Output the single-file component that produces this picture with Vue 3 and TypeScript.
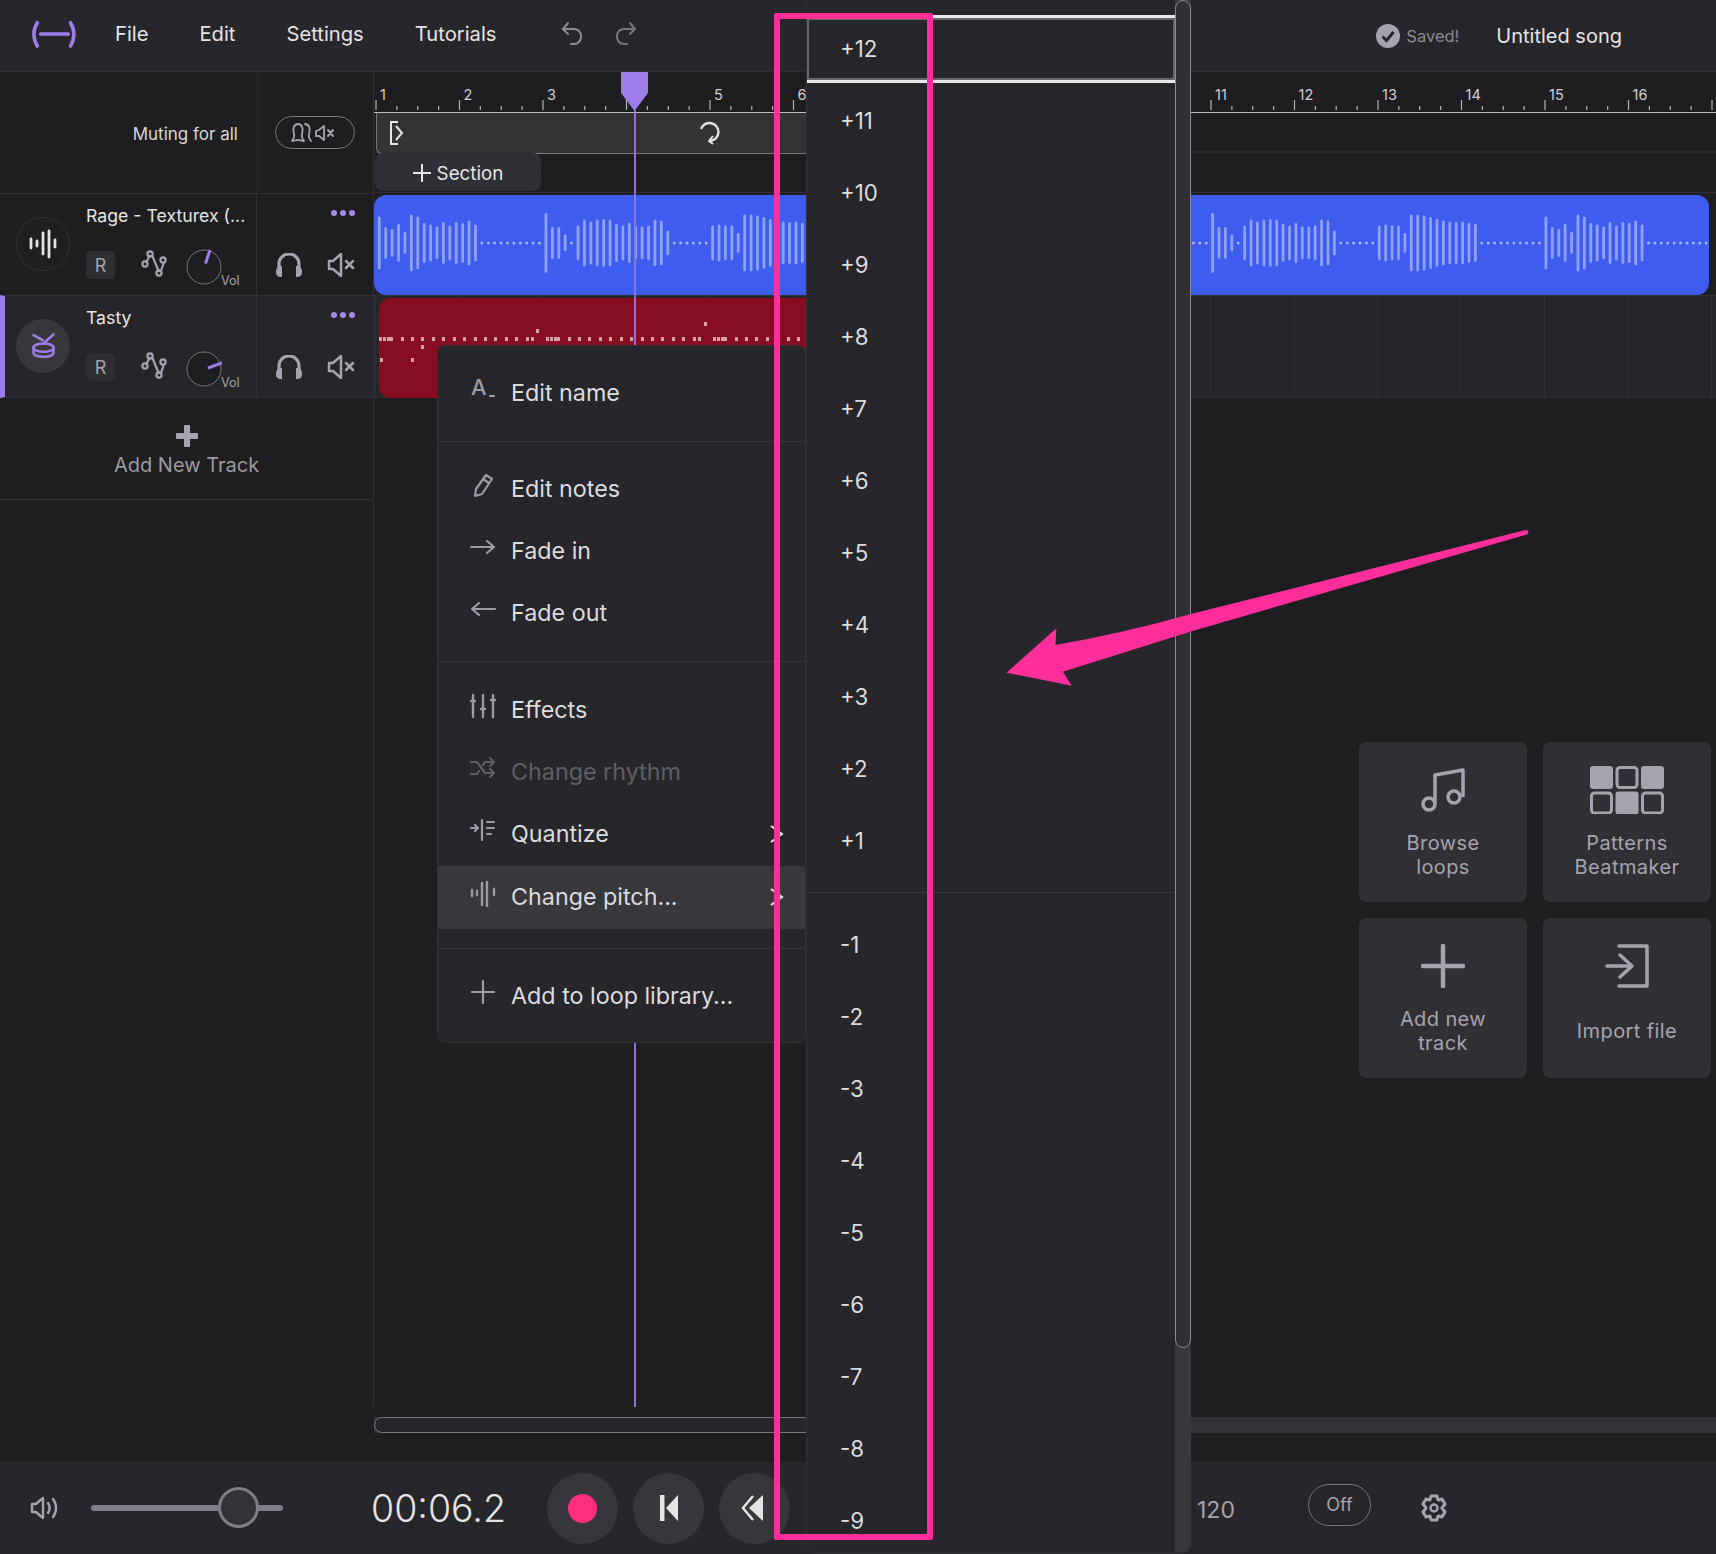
<!-- DAW screen with the track context menu and the pitch submenu open -->
<template>
  <div class="app">
    <header class="topbar">
      <svg class="logo" width="48" height="32" viewBox="0 0 48 32" fill="none" stroke="#9d7de9" stroke-width="3.6" stroke-linecap="round">
        <path d="M7.3 4.7Q.5 16 7.3 28" />
        <path d="M10.7 16H38.3" />
        <path d="M40.5 4.7Q47.3 16 40.5 28" />
      </svg>
      <nav class="nav">
        <span v-for="item in navItems" :key="item">{{ item }}</span>
      </nav>
      <div class="history">
        <svg width="26" height="26" viewBox="0 0 26 26" fill="none" stroke="#8c8c92" stroke-width="2" stroke-linecap="round" stroke-linejoin="round">
          <path d="M9 2 4 8l5 5" /><path d="M4 8h11a7 7 0 0 1 7 7v1a7 7 0 0 1-7 7h-3" />
        </svg>
        <svg width="26" height="26" viewBox="0 0 26 26" fill="none" stroke="#77777c" stroke-width="2" stroke-linecap="round" stroke-linejoin="round">
          <path d="m17 2 5 6-5 5" /><path d="M22 8H11a7 7 0 0 0-7 7v1a7 7 0 0 0 7 7h3" />
        </svg>
      </div>
      <div class="saved">
        <svg width="24" height="24" viewBox="0 0 24 24">
          <circle cx="12" cy="12" r="12" fill="#a5a3ad" />
          <path d="m6.5 12.5 4 4 7-8.5" fill="none" stroke="#26262b" stroke-width="3" />
        </svg>
        <span>Saved!</span>
      </div>
      <div class="song-title">Untitled song</div>
    </header>

    <main class="workspace">
      <aside class="tracks">
        <div class="tracks-head">
          <div class="muting-label">Muting for all</div>
          <div class="muting-cell">
            <div class="muting-pill">
              <svg width="52" height="24" viewBox="0 0 52 24" fill="none" stroke="#a5a3ad" stroke-width="1.8" stroke-linejoin="round" stroke-linecap="round">
                <path d="M3 20c2-3 3-4 2-7C3 8 5 3 9 3s6 5 4 10c-1 3 0 4 2 7-3 0-3-1-6-1s-3 1-6 1z" />
                <path d="M16 3c4 0 6 5 4 10-1 3 0 4 2 7" />
                <path d="M27 10v5h3l5 4V5l-5 4z" />
                <path d="m39 9 5 6M44 9l-5 6" stroke-width="2" />
              </svg>
            </div>
          </div>
        </div>

        <div v-for="track in tracks" :key="track.name" class="track" :class="{ selected: track.selected }">
          <div class="track-main">
            <div class="avatar">
              <svg v-if="!track.selected" width="30" height="30" viewBox="0 0 30 30" stroke="#e4e4e4" stroke-width="2.800" stroke-linecap="round">
                <path d="M3 10v9M9 12v5M15 4v21M21 2v26M27 11v7" />
              </svg>
              <svg v-else width="25" height="28" viewBox="0 0 30 30" fill="none" stroke="#9d7de9" stroke-width="3" stroke-linecap="round">
                <path d="M3 2l11 6M27 1 15 12" />
                <ellipse cx="15" cy="17" rx="12" ry="5" />
                <path d="M3 17v6c0 3 5 5 12 5s12-2 12-5v-6" />
              </svg>
            </div>
            <div class="track-info">
              <div class="track-name">{{ track.name }}</div>
              <div class="track-controls">
                <span class="rec-chip">R</span>
                <svg class="route" width="26" height="27" viewBox="0 0 26 27" fill="none" stroke="#a5a3ad" stroke-width="2.200">
                  <path d="M5 13 9 5M11 5l7 17M20 21l3-9" />
                  <circle cx="9" cy="4" r="2.600" /><circle cx="4" cy="14" r="2.600" />
                  <circle cx="18" cy="23" r="2.600" /><circle cx="22" cy="10" r="2.600" />
                </svg>
                <div class="knob">
                  <svg width="36" height="36" viewBox="0 0 36 36" fill="none">
                    <circle cx="18" cy="18" r="17" :fill="track.selected ? '#1e1e21' : 'none'" stroke="#77777c" stroke-width="1" />
                    <path :d="track.knob" stroke="#9d7de9" stroke-width="3" />
                  </svg>
                  <span>Vol</span>
                </div>
              </div>
            </div>
          </div>
          <div class="track-side">
            <div class="more"><i /><i /><i /></div>
            <div class="track-toggles">
              <svg width="28" height="24" viewBox="0 0 28 24" fill="none">
                <path d="M4 17v-6a10 10 0 0 1 20 0v6" stroke="#a5a3ad" stroke-width="3.200" />
                <path d="M1 19c0-4 2-6 6-6v11c-4 0-6-1-6-5zM27 19c0-4-2-6-6-6v11c4 0 6-1 6-5z" fill="#a5a3ad" />
              </svg>
              <svg width="28" height="24" viewBox="0 0 28 24" fill="none" stroke="#a5a3ad" stroke-width="2.500" stroke-linejoin="round" stroke-linecap="round">
                <path d="M2 8v8h4l8 7V1L6 8z" /><path d="m19 8 7 7M26 8l-7 7" />
              </svg>
            </div>
          </div>
        </div>

        <div class="add-track">
          <svg width="24" height="24" viewBox="0 0 24 24" fill="#a5a3ad">
            <rect x="9" y="1" width="6" height="22" rx="1" /><rect x="1" y="9" width="22" height="6" rx="1" />
          </svg>
          <span>Add New Track</span>
        </div>
      </aside>

      <section class="timeline">
        <svg class="ruler" width="1342" height="40" viewBox="0 0 1342 40">
          <path :d="rulerTicks" stroke="#b5b5b8" stroke-width="1.200" fill="none" />
          <text v-for="bar in rulerLabels" :key="bar.n" :x="bar.x + 4" y="28" class="ruler-num">{{ bar.n }}</text>
        </svg>
        <div class="loop-row">
          <div class="loop-bar">
            <svg class="loop-in" width="16" height="24" viewBox="0 0 16 24" fill="none" stroke="#e4e4e4" stroke-width="2">
              <path d="M9 1H2v22h7M7 5l6 7-6 7" />
            </svg>
            <svg class="loop-mode" width="24" height="26" viewBox="0 0 24 26" fill="none" stroke="#e4e4e4" stroke-width="2.400">
              <path d="M3 10a9 9 0 1 1 9 12" />
              <path d="m15 17-4 5 4 3" stroke-width="2" />
            </svg>
          </div>
        </div>
        <div class="section-row">
          <button class="section-btn">
            <svg width="18" height="18" viewBox="0 0 18 18" stroke="#e4e4e4" stroke-width="2"><path d="M9 0v18M0 9h18" /></svg>
            Section
          </button>
        </div>

        <div class="lane lane-audio">
          <div class="clip clip-blue">
            <svg width="1335" height="100" viewBox="0 0 1335 100">
              <template v-for="(b, i) in waveBars" :key="i">
                <circle v-if="b.h === 0" :cx="b.x" cy="48" r="1.500" fill="#a9b5f7" />
                <rect v-else :x="b.x - 1.400" :y="48 - b.h / 2" width="2.800" :height="b.h" rx="1.400" fill="#8ea0f7" />
              </template>
            </svg>
          </div>
        </div>
        <div class="lane lane-midi">
          <div class="clip clip-red">
            <svg width="430" height="101" viewBox="0 0 430 101">
              <rect v-for="(n, i) in midiNotes" :key="i" :x="n.x" :y="n.y" width="3" height="4" fill="#d8a0a8" />
            </svg>
          </div>
        </div>

        <div class="empty">
          <div class="cards">
            <div class="card">
              <svg class="card-icon" width="46" height="44" viewBox="0 0 46 44" fill="none" stroke="#a5a3ad" stroke-width="3.500" stroke-linejoin="round">
                <circle cx="9" cy="36" r="6" /><circle cx="34" cy="29" r="6" />
                <path d="M15 36V7L43 2v27" />
              </svg>
              <div class="card-label">Browse<br />loops</div>
            </div>
            <div class="card">
              <svg class="card-icon grid-icon" width="74" height="48" viewBox="0 0 74 48">
                <rect v-for="(cell, i) in patternCells" :key="i" :x="cell.x" :y="cell.y" :width="cell.on ? 23 : 20" :height="cell.on ? 23 : 20" rx="3"
                  :fill="cell.on ? '#a5a3ad' : 'none'" :stroke="cell.on ? 'none' : '#a5a3ad'" stroke-width="3" />
              </svg>
              <div class="card-label">Patterns<br />Beatmaker</div>
            </div>
            <div class="card">
              <svg class="card-icon" width="44" height="44" viewBox="0 0 44 44" stroke="#a5a3ad" stroke-width="4.500" stroke-linecap="round">
                <path d="M22 2v40M2 22h40" />
              </svg>
              <div class="card-label">Add new<br />track</div>
            </div>
            <div class="card">
              <svg class="card-icon" width="44" height="44" viewBox="0 0 44 44" fill="none" stroke="#a5a3ad" stroke-width="3.500" stroke-linecap="round" stroke-linejoin="round">
                <path d="M14 2h28v40H14M2 22h25M15 11l12 11-12 11" />
              </svg>
              <div class="card-label">Import file</div>
            </div>
          </div>
        </div>

        <div class="hscroll"><div class="hscroll-thumb" /></div>

        <div class="playhead">
          <svg width="27" height="40" viewBox="0 0 27 40"><path d="M0 0h27v21L13.500 39 0 21z" fill="#9d7de9" /></svg>
          <div class="playhead-line" />
        </div>
      </section>
    </main>

    <footer class="transport">
      <svg class="speaker" width="30" height="28" viewBox="0 0 30 28" fill="none" stroke="#a5a3ad" stroke-width="2.400" stroke-linejoin="round" stroke-linecap="round">
        <path d="M2 10v8h4l7 6V4L6 10z" /><path d="M18 9c2 3 2 7 0 10M23 5c4 5 4 13 0 18" />
      </svg>
      <div class="volume">
        <div class="volume-thumb" />
      </div>
      <div class="clock">00:06.2</div>
      <div class="round-btn first">
        <div class="rec-dot" />
      </div>
      <div class="round-btn">
        <svg width="20" height="28" viewBox="0 0 20 28" fill="#e4e4e4"><rect x="1" y="1" width="4.500" height="26" /><path d="M7 14 19 1v26z" /></svg>
      </div>
      <div class="round-btn rewind">
        <svg width="32" height="28" viewBox="0 0 32 28"><path d="M12 2 2 14l10 12" fill="none" stroke="#e4e4e4" stroke-width="2.500" /><path d="M8 14 22 1v26z" fill="#e4e4e4" /></svg>
      </div>
      <div class="tempo">120</div>
      <div class="off-pill">Off</div>
      <svg class="gear" width="28" height="28" viewBox="0 0 28 28" fill="none" stroke="#a5a3ad" stroke-width="3">
        <path d="M11 2h6l1 4 4-1 3 5-3 4 3 4-3 5-4-1-1 4h-6l-1-4-4 1-3-5 3-4-3-4 3-5 4 1z" stroke-linejoin="round" />
        <circle cx="14" cy="14" r="3.500" stroke-width="2.500" />
      </svg>
    </footer>

    <div class="context-menu">
      <div v-for="(group, g) in menuGroups" :key="g" class="menu-group">
        <div v-for="item in group" :key="item.label" class="menu-item" :class="{ disabled: item.disabled, active: item.active }">
          <svg class="menu-icon" width="24" height="24" viewBox="0 0 24 24" fill="none" :stroke="item.disabled ? '#5f5f65' : '#9d9ba5'" stroke-width="2.200" stroke-linecap="round" stroke-linejoin="round">
            <template v-if="item.icon === 'name'">
              <text x="0" y="18" class="icon-a">A</text><path d="M19 19h4" />
            </template>
            <path v-else-if="item.icon === 'pencil'" d="M15 2l6 4-10 15-7 2 1-7zM12 6l6 4" />
            <path v-else-if="item.icon === 'right'" d="M0 12h23M16 6l7 6-7 6" />
            <path v-else-if="item.icon === 'left'" d="M24 12H1M8 6l-7 6 7 6" />
            <path v-else-if="item.icon === 'effects'" d="M2 1v22M12 1v22M22 1v22M0 7h4M10 15h4M20 6h4" stroke-width="2.400" />
            <path v-else-if="item.icon === 'rhythm'" d="M0 6h6l8 11h9M0 18h6l2-3M12 9l2-3h9M19 2l4 4-4 4M19 13l4 4-4 4" />
            <path v-else-if="item.icon === 'quantize'" d="M0 10h7M4 7l3 3-3 3M11 2v20M16 4h7M16 10h7M16 16h4" />
            <path v-else-if="item.icon === 'pitch'" d="M1 8v6M6 9v4M11 1v22M16 0v24M23 7v6" stroke-width="2.400" />
            <path v-else-if="item.icon === 'plus'" d="M12 1v22M1 12h22" />
          </svg>
          <span>{{ item.label }}</span>
          <svg v-if="item.chevron" class="chevron" width="14" height="18" viewBox="0 0 14 18" fill="none" stroke="#e4e4e4" stroke-width="2"><path d="m1 1 11 8-11 8" /></svg>
        </div>
      </div>
    </div>

    <div class="pitch-menu">
      <div class="pitch-list">
        <div v-for="(value, i) in pitchUp" :key="value" class="pitch-item" :class="{ focused: i === 0 }">{{ value }}</div>
        <div class="pitch-divider" />
        <div v-for="value in pitchDown" :key="value" class="pitch-item">{{ value }}</div>
      </div>
      <div class="pitch-scroll"><div class="pitch-scroll-thumb" /></div>
    </div>

    <div class="callout-box" />
    <svg class="callout-arrow" width="540" height="170" viewBox="1000 525 540 170">
      <path d="M1525.7 530.100 1190 614.300Q1120 634 1055.400 645L1056.400 628.300 1006.400 672.700 1071.800 685.700 1062.900 671.700 1190 631.700 1527.500 534.300Q1530 530 1525.700 530.100z" fill="#ff2e9a" />
    </svg>
  </div>
</template>

<script setup lang="ts">
interface Track {
  name: string
  selected: boolean
  knob: string
}

interface MenuItem {
  label: string
  icon: string
  disabled?: boolean
  active?: boolean
  chevron?: boolean
}

const navItems = ['File', 'Edit', 'Settings', 'Tutorials']

const tracks: Track[] = [
  { name: 'Rage - Texturex (...', selected: false, knob: 'M19.500 14.500 24 1' },
  { name: 'Tasty', selected: true, knob: 'M22 17 36 12' },
]

const BAR_WIDTH = 83.5

const rulerBars = Array.from({ length: 17 }, (_, i) => ({ n: i + 1, x: 2 + i * BAR_WIDTH }))
// bar 17 only shows its tick, the number would run off the page
const rulerLabels = rulerBars.slice(0, 16)

const rulerTicks = rulerBars
  .map((bar) => {
    let d = `M${bar.x} 28V38`
    for (let t = 1; t < 4; t++) d += `M${bar.x + (t * BAR_WIDTH) / 4} 34V38`
    return d
  })
  .join('')

// bar heights of the three phrases, 0 is a silent dot
const A = [53, 32, 28, 38, 22, 57, 53, 40, 37, 33, 42, 35, 42, 40, 45, 37, 0, 0, 0, 0, 0, 0, 0, 0, 0, 0]
const B = [60, 32, 32, 17, 0, 35, 47, 43, 47, 48, 47, 38, 35, 40, 33, 33, 35, 47, 45, 25, 0, 0, 0, 0, 0, 0]
const C = [35, 37, 35, 35, 20, 57, 57, 55, 52, 48, 45, 43, 42, 43, 40, 38, 0, 0, 0, 0, 0, 0, 0, 0, 0, 0]

const waveBars = [A, B, C, A, A, B, C, A]
  .flat()
  .map((h, i) => ({ h, x: 5.3 + i * 6.41 }))

const MIDI_STEPS = [0, 4, 8, 11, 22, 32, 42, 53, 63, 74, 84, 95, 105, 115, 126, 136, 147, 152]

const midiNotes = [
  ...[0, 1, 2].flatMap((k) => MIDI_STEPS.map((s) => ({ x: s + k * 167, y: 39 }))),
  ...[42, 126, 209, 293, 376].map((x) => ({ x, y: 47 })),
  { x: 157, y: 31 },
  { x: 325, y: 24 },
  { x: 1, y: 60 },
  { x: 32, y: 60 },
]

const patternCells = [
  { x: 0, y: 0, on: true },
  { x: 27, y: 1.5, on: false },
  { x: 51, y: 0, on: true },
  { x: 1.5, y: 27, on: false },
  { x: 25.5, y: 25.5, on: true },
  { x: 52.5, y: 27, on: false },
]

const menuGroups: MenuItem[][] = [
  [{ label: 'Edit name', icon: 'name' }],
  [
    { label: 'Edit notes', icon: 'pencil' },
    { label: 'Fade in', icon: 'right' },
    { label: 'Fade out', icon: 'left' },
  ],
  [
    { label: 'Effects', icon: 'effects' },
    { label: 'Change rhythm', icon: 'rhythm', disabled: true },
    { label: 'Quantize', icon: 'quantize', chevron: true },
    { label: 'Change pitch...', icon: 'pitch', active: true, chevron: true },
  ],
  [{ label: 'Add to loop library...', icon: 'plus' }],
]

const pitchUp = Array.from({ length: 12 }, (_, i) => `+${12 - i}`)
const pitchDown = Array.from({ length: 9 }, (_, i) => `-${i + 1}`)
</script>

<style>
html,
body {
  margin: 0;
  background: #1e1e21;
}
</style>

<style scoped>
.app {
  position: relative;
  width: 1716px;
  height: 1554px;
  overflow: hidden;
  display: flex;
  flex-direction: column;
  background: #1e1e21;
  color: #e4e4e4;
  font-family: Inter, "Liberation Sans", sans-serif;
}

.topbar {
  flex: none;
  height: 72px;
  box-sizing: border-box;
  display: flex;
  align-items: center;
  padding: 0 0 4px 30px;
  background: #26262b;
  border-bottom: 1px solid #303035;
}

.nav {
  display: flex;
  gap: 51px;
  margin-left: 37px;
  font-size: 20.200px;
}

.history {
  display: flex;
  gap: 28px;
  margin-left: 63px;
}

.saved {
  margin-left: auto;
  display: flex;
  align-items: center;
  gap: 6px;
  font-size: 16.500px;
  color: #8a8a90;
  padding-top: 4px;
}

.song-title {
  margin: 4px 94px 0 37px;
  font-size: 20px;
}

.workspace {
  flex: 1;
  min-height: 0;
  display: flex;
}

.tracks {
  flex: none;
  width: 374px;
  box-sizing: border-box;
  height: 1334px;
  border-right: 1px solid #303035;
}

.tracks-head {
  height: 121px;
  display: flex;
}

.muting-label {
  width: 238px;
  padding-top: 52px;
  text-align: right;
  font-size: 17px;
  color: #d6d6d8;
}

.muting-cell {
  margin-left: 19px;
  flex: 1;
  border-left: 1px solid #2b2b2f;
  padding: 44px 0 0 17px;
}

.muting-pill {
  width: 80px;
  height: 33px;
  box-sizing: border-box;
  border: 1px solid #77777c;
  border-radius: 17px;
  display: flex;
  align-items: center;
  justify-content: center;
}

.track {
  height: 102px;
  box-sizing: border-box;
  display: flex;
  border-top: 1px solid #303035;
}

.track.selected {
  height: 102.500px;
  background: #26262a;
  border-left: 5px solid #9d7de9;
  border-bottom: 1px solid #303035;
}

.track-main {
  width: 257px;
  box-sizing: border-box;
  display: flex;
  padding: 10px 0 0 16px;
  border-right: 1px solid #303035;
}

.track.selected .track-main {
  width: 252px;
  padding-left: 11px;
}

.avatar {
  flex: none;
  width: 54px;
  height: 54px;
  margin-top: 13px;
  box-sizing: border-box;
  border: 1px solid #303035;
  border-radius: 50%;
  display: flex;
  align-items: center;
  justify-content: center;
}

.track.selected .avatar {
  background: #38383c;
  border: none;
}

.track-info {
  margin-left: 16px;
}

.track-name {
  height: 30px;
  font-size: 17.700px;
  white-space: nowrap;
  line-height: 24px;
}

.track-controls {
  display: flex;
  margin-top: 17px;
}

.rec-chip {
  width: 29px;
  height: 28px;
  border-radius: 5px;
  background: #2f2f33;
  color: #a5a3ad;
  font-size: 18px;
  line-height: 29px;
  text-align: center;
}

.route {
  margin: -1px 0 0 26px;
}

.knob {
  display: flex;
  margin: -2px 0 0 19px;
}

.knob span {
  align-self: flex-end;
  margin: 0 0 -3px -1px;
  font-size: 12.500px;
  color: #a5a3ad;
}

.track-side {
  flex: 1;
  padding: 16px 18px 0 18px;
}

.more {
  display: flex;
  gap: 3px;
  justify-content: flex-end;
}

.more i {
  width: 6px;
  height: 6px;
  border-radius: 50%;
  background: #a688ec;
}

.track-toggles {
  display: flex;
  justify-content: space-between;
  margin-top: 37px;
}

.add-track {
  height: 102.500px;
  box-sizing: border-box;
  display: flex;
  flex-direction: column;
  align-items: center;
  padding-top: 26px;
  border-bottom: 1px solid #303035;
  color: #9a9aa0;
  font-size: 20px;
  gap: 5px;
}

.timeline {
  position: relative;
  flex: 1;
  min-width: 0;
  display: flex;
  flex-direction: column;
}

.ruler {
  flex: none;
  display: block;
}

.ruler-num {
  font-size: 14.500px;
  fill: #cfcfd2;
}

.loop-row {
  flex: none;
  height: 41px;
  box-sizing: border-box;
  border-top: 1px solid #bdbdc0;
  border-bottom: 2px solid #2a2a2e;
}

.loop-bar {
  width: 433px;
  height: 41px;
  margin-left: 2px;
  box-sizing: border-box;
  display: flex;
  align-items: center;
  padding-left: 12px;
  background: #333336;
  border-left: 1px solid #77777c;
  border-bottom: 1px solid #77777c;
  border-radius: 0 0 0 6px;
}

.loop-mode {
  margin: -2px 0 0 293px;
}

.section-row {
  flex: none;
  height: 39px;
}

.section-btn {
  width: 166px;
  height: 38px;
  margin: 0 0 0 1px;
  padding: 2px 0 0;
  border: none;
  border-radius: 8px;
  display: flex;
  align-items: center;
  justify-content: center;
  gap: 6px;
  background: #2f2f35;
  color: #e4e4e4;
  font: 18.800px Inter, "Liberation Sans", sans-serif;
}

.lane {
  flex: none;
  box-sizing: border-box;
  border-top: 1px solid #303035;
}

.lane-audio {
  height: 102.500px;
  background-color: #1e1e21;
  padding: 2px 7px 0 0;
}

.lane-midi {
  height: 103px;
  background-color: #26262a;
  background-image: linear-gradient(to right, #303035 1px, transparent 1px);
  background-size: 83.500px 100%;
  background-position: 1px 0;
  padding: 2px 0 0 5px;
  border-bottom: 1px solid #303035;
}

.clip {
  overflow: hidden;
}

.clip svg {
  display: block;
}

.clip-blue {
  height: 100px;
  background: #3e5ced;
  border-radius: 12px;
}

.clip-red {
  width: 430px;
  height: 100px;
  background: #860e20;
  border-radius: 12px 0 0 12px;
}

.empty {
  flex: 1;
  display: flex;
  justify-content: flex-end;
  padding: 344px 5px 0 0;
}

.cards {
  display: grid;
  grid-template-columns: 168px 168px;
  grid-auto-rows: 160px;
  gap: 16px;
}

.card {
  display: flex;
  flex-direction: column;
  align-items: center;
  padding-top: 26px;
  box-sizing: border-box;
  background: #303034;
  border-radius: 7px;
  color: #a5a3ad;
}

.card-icon {
  flex: none;
}

.grid-icon {
  margin: -2px 0;
}

.card-label {
  height: 50px;
  margin-top: 18px;
  display: flex;
  align-items: center;
  text-align: center;
  font-size: 20px;
  letter-spacing: 0.4px;
  line-height: 24px;
}

.hscroll {
  flex: none;
  height: 16px;
  margin-bottom: 29px;
  background: #323238;
}

.hscroll-thumb {
  width: 500px;
  height: 16px;
  box-sizing: border-box;
  background: #26262b;
  border: 1px solid #77777c;
  border-radius: 8px;
}

.playhead {
  position: absolute;
  left: 247px;
  top: 0;
  display: flex;
  flex-direction: column;
  align-items: center;
}

.playhead svg {
  display: block;
}

.playhead-line {
  width: 2px;
  height: 1297px;
  margin-top: -2px;
  background: #9474e4;
  opacity: 0.95;
}

.transport {
  flex: none;
  height: 92px;
  box-sizing: border-box;
  display: flex;
  align-items: center;
  padding-left: 30px;
  background: #26262b;
}

.volume {
  position: relative;
  width: 192px;
  height: 6px;
  margin-left: 31px;
  border-radius: 3px;
  background: #7f7d88;
}

.volume-thumb {
  position: absolute;
  left: 127px;
  top: -18px;
  width: 41px;
  height: 41px;
  box-sizing: border-box;
  border: 3px solid #7f7d88;
  border-radius: 50%;
  background: #323236;
}

.clock {
  margin-left: 88px;
  width: 176px;
  font-size: 37.500px;
  font-weight: 300;
}

.round-btn {
  width: 71px;
  height: 71px;
  margin-left: 15px;
  border-radius: 50%;
  background: #37373b;
  display: flex;
  align-items: center;
  justify-content: center;
}

.round-btn.first {
  margin-left: 0;
}

.round-btn.rewind svg {
  margin-left: 4px;
}

.rec-dot {
  width: 29px;
  height: 29px;
  border-radius: 50%;
  background: #ff2e7e;
}

.tempo {
  margin-left: 407px;
  width: 111px;
  padding-top: 3px;
  font-size: 23px;
  color: #a5a3ad;
}

.off-pill {
  width: 63px;
  height: 42px;
  box-sizing: border-box;
  margin-top: -6px;
  border: 1px solid #77777c;
  border-radius: 21px;
  font-size: 18px;
  line-height: 40px;
  text-align: center;
  color: #a5a3ad;
}

.gear {
  margin-left: 49px;
}

.context-menu {
  position: absolute;
  left: 437px;
  top: 345px;
  width: 369px;
  height: 698px;
  box-sizing: border-box;
  background: #26262b;
  border: 1px solid #303035;
  border-radius: 8px;
  font-size: 23.300px;
}

.menu-group {
  padding: 16px 0;
  border-bottom: 1px solid #38383c;
}

.menu-group:nth-child(1),
.menu-group:nth-child(2) {
  padding-bottom: 17px;
}

.menu-group:nth-child(3) {
  padding-top: 17px;
  padding-bottom: 19px;
}

.menu-group:last-child {
  border-bottom: none;
}

.menu-item {
  position: relative;
  height: 62px;
  box-sizing: border-box;
  display: flex;
  align-items: center;
  padding: 0 0 2px 33px;
  gap: 16px;
  color: #dcdcde;
}

.menu-item.disabled {
  color: #5f5f65;
}

.menu-item.active {
  margin-top: 1px;
  height: 63px;
  background: #38383c;
}

.menu-icon {
  flex: none;
  margin-top: -6px;
  overflow: visible;
}

.icon-a {
  font-size: 22px;
  fill: #9d9ba5;
  stroke: none;
  font-weight: 500;
}

.chevron {
  position: absolute;
  left: 332px;
  top: 22px;
}

.pitch-menu {
  position: absolute;
  left: 806px;
  top: 0;
  width: 385px;
  height: 1553px;
  display: flex;
  overflow: hidden;
  box-sizing: border-box;
  background: #26262b;
  border-left: 1px solid #303035;
  border-bottom: 1px solid #303035;
  border-radius: 0 0 8px 8px;
}

.pitch-list {
  flex: 1;
  min-width: 0;
  padding-top: 15px;
}

.pitch-item {
  height: 72px;
  box-sizing: border-box;
  display: flex;
  align-items: center;
  padding: 0 0 2px 33px;
  font-size: 22.300px;
  color: #dcdcde;
}

.pitch-item.focused {
  height: 68px;
  margin-bottom: 2px;
  padding-bottom: 1px;
  border-top: 3px solid #e8e8e8;
  border-bottom: 3px solid #e8e8e8;
  box-shadow: inset 0 0 0 2px #66666b;
}

.pitch-divider {
  height: 1px;
  margin: 15px 0 16px;
  background: #38383c;
}

.pitch-scroll {
  flex: none;
  width: 16px;
  background: #37373c;
}

.pitch-scroll-thumb {
  height: 1348px;
  box-sizing: border-box;
  border: 1px solid #8b8b90;
  border-radius: 8px;
  background: #2f2f34;
}

.callout-box {
  position: absolute;
  left: 774px;
  top: 13px;
  width: 159px;
  height: 1527px;
  box-sizing: border-box;
  border: 6px solid #ff2e9a;
  border-radius: 2px;
}

.callout-arrow {
  position: absolute;
  left: 1000px;
  top: 525px;
}
</style>
